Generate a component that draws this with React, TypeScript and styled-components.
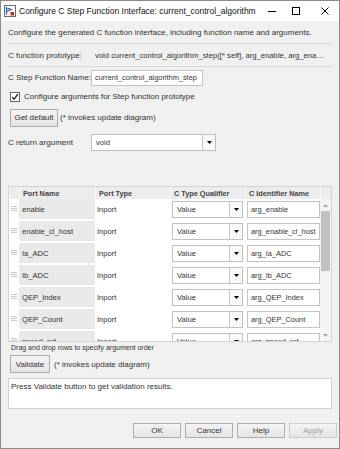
import styled, { createGlobalStyle } from 'styled-components';

const GlobalStyle = createGlobalStyle`
  body {
    margin: 0;
    font-family: 'Liberation Sans', Arial, sans-serif;
    color: #333;
  }
`;

const ports = [
  'enable',
  'enable_cl_host',
  'Ia_ADC',
  'Ib_ADC',
  'QEP_Index',
  'QEP_Count',
  'speed_ref',
];

const cols = '10px 76px 75px 75px 75px';

const Window = styled.div`
  width: 340px;
  height: 449px;
  box-sizing: border-box;
  border: 1px solid #8c8c8c;
  background: #f0f0f0;
  display: flex;
  flex-direction: column;
  overflow: hidden;
  font-size: 8px;
`;

const TitleBar = styled.div`
  height: 20px;
  background: #fff;
  display: flex;
  align-items: center;
  padding-left: 3px;
  gap: 3px;
  font-size: 8.5px;
  color: #111;
`;

const Controls = styled.div`
  margin-left: auto;
  display: flex;
  height: 100%;
`;

const Control = styled.div<{ $w: number }>`
  width: ${(p) => p.$w}px;
  height: 100%;
  display: flex;
  align-items: center;
  justify-content: center;
`;

const Body = styled.div`
  padding: 0 7px;
  display: flex;
  flex-direction: column;
`;

const Line = styled.div<{ $h: number }>`
  height: ${(p) => p.$h}px;
  display: flex;
  align-items: center;
  white-space: nowrap;
`;

const Separator = styled.div`
  height: 1px;
  background: #d9d9d9;
`;

const Label = styled.div<{ $w: number }>`
  width: ${(p) => p.$w}px;
  flex-shrink: 0;
`;

const Prototype = styled.div`
  overflow: hidden;
  text-overflow: ellipsis;
  white-space: nowrap;
  flex: 1;
  padding-right: 4px;
  font-size: 7.7px;
`;

const TextBox = styled.div<{ $w: number; $h?: number }>`
  width: ${(p) => p.$w}px;
  height: ${(p) => p.$h ?? 16}px;
  box-sizing: border-box;
  background: #fff;
  border: 1px solid #c4c4c4;
  padding-left: 3px;
  display: flex;
  align-items: center;
  white-space: nowrap;
  overflow: hidden;
  font-size: 7.4px;
`;

const CheckBox = styled.div`
  width: 10px;
  height: 10px;
  box-sizing: border-box;
  border: 1px solid #666;
  background: #fff;
  margin: 0 4px 0 2px;
  display: flex;
  align-items: center;
  justify-content: center;
`;

const Button = styled.div<{ $w: number; $h?: number; $disabled?: boolean }>`
  width: ${(p) => p.$w}px;
  height: ${(p) => p.$h ?? 18}px;
  box-sizing: border-box;
  border: 1px solid ${(p) => (p.$disabled ? '#cccccc' : '#adadad')};
  background: linear-gradient(#f4f4f4, #e4e4e4);
  color: ${(p) => (p.$disabled ? '#a0a0a0' : '#333')};
  display: flex;
  align-items: center;
  justify-content: center;
  flex-shrink: 0;
`;

const Note = styled.span<{ $gap: number }>`
  margin-left: ${(p) => p.$gap}px;
`;

const Select = styled.div<{ $w: number; $h?: number }>`
  width: ${(p) => p.$w}px;
  height: ${(p) => p.$h ?? 17}px;
  box-sizing: border-box;
  display: flex;
  background: #fff;
  border: 1px solid #c0c0c0;
  font-size: 7.6px;
`;

const SelectText = styled.div`
  flex: 1;
  display: flex;
  align-items: center;
  padding-left: 4px;
`;

const SelectArrow = styled.div`
  width: 12px;
  border-left: 1px solid #c8c8c8;
  background: #fafafa;
  display: flex;
  align-items: center;
  justify-content: center;
`;

const Table = styled.div`
  margin-top: 35px;
  height: 156px;
  box-sizing: border-box;
  border: 1px solid #d4d4d4;
  background: #fff;
  display: flex;
  overflow: hidden;
`;

const Grid = styled.div`
  flex: 1;
  display: flex;
  flex-direction: column;
  overflow: hidden;
`;

const HeaderRow = styled.div`
  display: grid;
  grid-template-columns: ${cols};
  height: 12px;
  flex-shrink: 0;
  background: #ececec;
  font-weight: bold;
  font-size: 7.3px;
  color: #444;
`;

const HeaderCell = styled.div`
  display: flex;
  align-items: center;
  padding-left: 3px;
  border-left: 1px solid #f8f8f8;
`;

const Row = styled.div`
  display: grid;
  grid-template-columns: ${cols};
  height: 22px;
  flex-shrink: 0;
  padding-bottom: 2px;
  box-sizing: border-box;
  font-size: 7.6px;
`;

const Cell = styled.div<{ $shade?: boolean }>`
  display: flex;
  align-items: center;
  padding-left: ${(p) => (p.$shade ? 3 : 2)}px;
  background: ${(p) => (p.$shade ? '#e9e9e9' : 'transparent')};
  white-space: nowrap;
  overflow: hidden;
`;

const Handle = styled.div`
  display: flex;
  align-items: center;
  justify-content: center;
`;

const ScrollColumn = styled.div`
  width: 11px;
  display: flex;
  flex-direction: column;
`;

const ScrollHead = styled.div`
  height: 12px;
  background: #ececec;
  border-left: 1px solid #f8f8f8;
`;

const Track = styled.div`
  flex: 1;
  background: #f4f4f4;
  display: flex;
  flex-direction: column;
  align-items: center;
`;

const ScrollArrow = styled.div`
  height: 12px;
  display: flex;
  align-items: center;
  justify-content: center;
`;

const Thumb = styled.div`
  width: 9px;
  height: 60px;
  background: #c1c1c1;
`;

const Spacer = styled.div`
  flex: 1;
`;

const Hint = styled.div`
  height: 10px;
  display: flex;
  align-items: center;
  font-size: 7px;
  padding-left: 3px;
`;

const Output = styled.div`
  margin-top: 5px;
  height: 31px;
  box-sizing: border-box;
  background: #fff;
  border: 1px solid #d0d0d0;
  padding: 2px 2px;
  line-height: 12px;
`;

const Footer = styled.div`
  margin-top: auto;
  display: flex;
  justify-content: flex-end;
  gap: 4px;
  padding: 0 2px 10px 0;
`;

const Triangle = ({ color = '#000', up = false }: { color?: string; up?: boolean }) => (
  <svg width="5" height="3" viewBox="0 0 5 3">
    <path d={up ? 'M0 3 L2.5 0 L5 3 Z' : 'M0 0 L5 0 L2.5 3 Z'} fill={color} />
  </svg>
);

const App = () => {
  return (
    <>
      <GlobalStyle />
      <Window>
        <TitleBar>
          <svg width="12" height="12" viewBox="0 0 12 12">
            <rect x="0.5" y="0.5" width="11" height="11" fill="#fff" stroke="#6b6b6b" />
            <path d="M2.5 2 L2.5 9.5 M2.5 2.5 L7 4.5 L2.5 6.5" stroke="#2a5db0" strokeWidth="1.3" fill="none" />
            <rect x="6.5" y="7" width="3.5" height="3.5" fill="#d62b2b" />
          </svg>
          <span>Configure C Step Function Interface: current_control_algorithm</span>
          <Controls>
            <Control $w={19}>
              <svg width="8" height="8" viewBox="0 0 8 8">
                <path d="M0 4.5 H8" stroke="#000" strokeWidth="1" />
              </svg>
            </Control>
            <Control $w={29}>
              <svg width="8" height="8" viewBox="0 0 8 8">
                <rect x="0.5" y="0.5" width="7" height="7" fill="none" stroke="#000" />
              </svg>
            </Control>
            <Control $w={29}>
              <svg width="8" height="8" viewBox="0 0 8 8">
                <path d="M0.5 0.5 L7.5 7.5 M7.5 0.5 L0.5 7.5" stroke="#000" strokeWidth="1" />
              </svg>
            </Control>
          </Controls>
        </TitleBar>
        <Body>
          <Line $h={22}>
            Configure the generated C function interface, including function name and arguments.
          </Line>
          <Separator />
          <Line $h={22}>
            <Label $w={87}>C function prototype:</Label>
            <Prototype>void current_control_algorithm_step([* self], arg_enable, arg_enable_cl_host, arg_Ia_ADC)</Prototype>
          </Line>
          <Separator />
          <Line $h={21}>
            <Label $w={83}>C Step Function Name:</Label>
            <TextBox $w={112}>current_control_algorithm_step</TextBox>
          </Line>
          <Line $h={17}>
            <CheckBox>
              <svg width="8" height="8" viewBox="0 0 8 8">
                <path d="M1.2 4 L3 6.3 L6.8 1.2" stroke="#000" strokeWidth="1.1" fill="none" />
              </svg>
            </CheckBox>
            Configure arguments for Step function prototype
          </Line>
          <Line $h={19} style={{ marginTop: 3 }}>
            <Button $w={48} style={{ marginLeft: 2 }}>Get default</Button>
            <Note $gap={2}>(* invokes update diagram)</Note>
          </Line>
          <Line $h={17} style={{ marginTop: 7 }}>
            <Label $w={83}>C return argument</Label>
            <Select $w={125}>
              <SelectText>void</SelectText>
              <SelectArrow>
                <Triangle />
              </SelectArrow>
            </Select>
          </Line>
          <Table>
            <Grid>
              <HeaderRow>
                <HeaderCell />
                <HeaderCell>Port Name</HeaderCell>
                <HeaderCell>Port Type</HeaderCell>
                <HeaderCell>C Type Qualifier</HeaderCell>
                <HeaderCell>C Identifier Name</HeaderCell>
              </HeaderRow>
              {ports.map((name) => (
                <Row key={name}>
                  <Handle>
                    <svg width="6" height="6" viewBox="0 0 6 6">
                      <path d="M0 0.5 H6 M0 2.5 H6 M0 4.5 H6" stroke="#c8c8c8" strokeWidth="1" />
                    </svg>
                  </Handle>
                  <Cell $shade>{name}</Cell>
                  <Cell>Inport</Cell>
                  <Cell>
                    <Select $w={71} $h={17}>
                      <SelectText>Value</SelectText>
                      <SelectArrow>
                        <Triangle />
                      </SelectArrow>
                    </Select>
                  </Cell>
                  <Cell>
                    <TextBox $w={73} $h={17}>arg_{name}</TextBox>
                  </Cell>
                </Row>
              ))}
            </Grid>
            <ScrollColumn>
              <ScrollHead />
              <Track>
                <ScrollArrow>
                  <Triangle color="#a6a6a6" up />
                </ScrollArrow>
                <Thumb />
                <Spacer />
                <ScrollArrow>
                  <Triangle color="#a6a6a6" />
                </ScrollArrow>
              </Track>
            </ScrollColumn>
          </Table>
          <Hint>Drag and drop rows to specify argument order</Hint>
          <Line $h={18} style={{ marginTop: 3 }}>
            <Button $w={40} style={{ marginLeft: 2 }}>Validate</Button>
            <Note $gap={4}>(* invokes update diagram)</Note>
          </Line>
          <Output>Press Validate button to get validation results.</Output>
        </Body>
        <Footer>
          <Button $w={48} $h={15}>OK</Button>
          <Button $w={48} $h={15}>Cancel</Button>
          <Button $w={48} $h={15}>Help</Button>
          <Button $w={48} $h={15} $disabled>Apply</Button>
        </Footer>
      </Window>
    </>
  );
};

export default App;
